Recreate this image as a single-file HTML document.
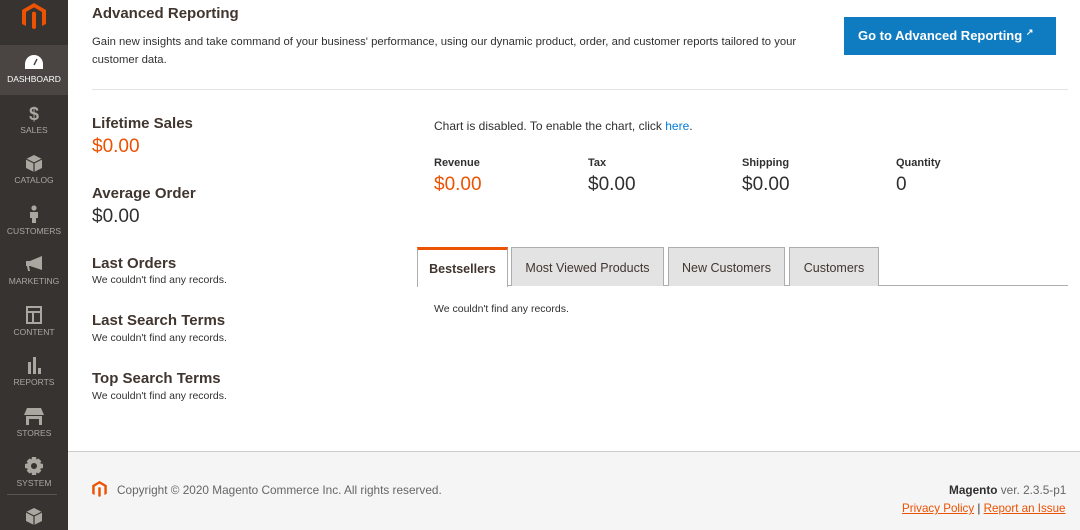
<!DOCTYPE html>
<html><head><meta charset="utf-8"><style>
*{box-sizing:border-box;margin:0;padding:0}
body{width:1080px;height:530px;overflow:hidden;font-family:"Liberation Sans",sans-serif;color:#303030;background:#fff;position:relative}
.sb{position:absolute;left:0;top:0;width:68px;height:530px;background:#373330}
.sb .it{position:absolute;left:0;width:68px;height:50px;text-align:center;color:#aaa6a0;font-size:8.5px}
.sb .it.act{background:#4a4542;color:#fff}
.sb svg.ic{display:block;margin:8px auto 3px;width:20px;height:18px;fill:#aaa6a0}
.sb .act svg.ic{fill:#fff}
.a{position:absolute;white-space:nowrap}
.h{font-weight:bold;font-size:15px;color:#41362f}
.s{font-size:11px;color:#303030}
.org{color:#eb5202}
.big{font-size:19px}
.tab{position:absolute;top:247px;height:39px;background:#e3e3e3;border:1px solid #adadad;border-bottom:none;font-size:12.5px;color:#41362f;text-align:center;line-height:40px}
</style></head><body>
<div class="sb">
<svg class="a" style="left:22px;top:3px" width="24" height="28" viewBox="0 0 24 28"><path d="M12 0L0 7v14l4 2V9l8-4.6L20 9v14l4-2V7z M10 9.5v15.5l2 1.2 2-1.2V9.5l-2-1z" fill="#eb5202"/></svg>
<div class="it act" style="top:45px"><svg class="ic" viewBox="0 0 20 18"><path d="M10 2A9 9 0 0 0 1 11v5h18v-5A9 9 0 0 0 10 2z"/><path d="M10 12l3-6" stroke="#4a4542" stroke-width="1.5"/></svg>DASHBOARD</div>
<div class="it" style="top:96px"><svg class="ic" viewBox="0 0 20 18"><text x="10" y="16" text-anchor="middle" font-size="18" font-weight="bold" font-family="Liberation Sans" fill="#aaa6a0">$</text></svg>SALES</div>
<div class="it" style="top:146px"><svg class="ic" viewBox="0 0 20 18"><path d="M10 1l8 4v9l-8 4-8-4V5z"/><path d="M2 5l8 4 8-4M10 9v9" stroke="#373330" stroke-width="1.2" fill="none"/></svg>CATALOG</div>
<div class="it" style="top:197px"><svg class="ic" viewBox="0 0 20 18"><circle cx="10" cy="3" r="2.6"/><path d="M6 7h8v6h-2v5h-4v-5H6z"/></svg>CUSTOMERS</div>
<div class="it" style="top:247px"><svg class="ic" viewBox="0 0 20 18"><path d="M2 6h4l12-5v14L6 11H5l1 5H4l-1-5H2z"/></svg>MARKETING</div>
<div class="it" style="top:298px"><svg class="ic" viewBox="0 0 20 18"><path d="M2 0h16v18H2z M4 2v3h12V2z M4 7v9h4V7z M10 7v9h6V7z" fill-rule="evenodd"/></svg>CONTENT</div>
<div class="it" style="top:348px"><svg class="ic" viewBox="0 0 20 18"><path d="M4 6h3v12H4zM9 1h3v17H9zM14 12h3v6h-3z"/></svg>REPORTS</div>
<div class="it" style="top:399px"><svg class="ic" viewBox="0 0 20 18"><path d="M3 1h14l3 7H0z M2 9h16v9H2z"/><path d="M5 12h10v6H5z" fill="#373330"/></svg>STORES</div>
<div class="it" style="top:449px"><svg class="ic" viewBox="0 0 20 18"><path d="M8 0h4l.5 2.5 2-1 2.8 2.8-1.2 2 2.9.7v4l-2.9.7 1.2 2-2.8 2.8-2-1L12 18H8l-.5-2.5-2 1-2.8-2.8 1.2-2L1 11V7l2.9-.7-1.2-2L5.5 1.5l2 1z"/><circle cx="10" cy="9" r="3" fill="#373330"/></svg>SYSTEM</div>
<div class="a" style="left:7px;top:494px;width:50px;height:1px;background:#5a5550"></div>
<svg class="a" style="left:24px;top:507px" width="20" height="18" viewBox="0 0 20 18"><path d="M10 1l8 4v9l-8 4-8-4V5z" fill="#aaa6a0"/><path d="M2 5l8 4 8-4M10 9v9" stroke="#373330" stroke-width="1.2" fill="none"/></svg>
</div>

<div class="a h" style="left:92px;top:5px">Advanced Reporting</div>
<div class="a s" style="left:92px;top:33px;font-size:11.3px;line-height:18px;white-space:normal;width:740px">Gain new insights and take command of your business' performance, using our dynamic product, order, and customer reports tailored to your customer data.</div>
<div class="a" style="left:844px;top:17px;width:212px;height:38px;background:#0f7bc1;color:#fff;font-size:13px;font-weight:bold;line-height:38px;padding-left:14px">Go to Advanced Reporting <span style="font-size:9px;position:relative;top:-5px">↗</span></div>
<div class="a" style="left:92px;top:89px;width:976px;height:1px;background:#e3e3e3"></div>

<div class="a h" style="left:92px;top:115px">Lifetime Sales</div>
<div class="a org big" style="left:92px;top:136px">$0.00</div>
<div class="a h" style="left:92px;top:185px">Average Order</div>
<div class="a big" style="left:92px;top:206px">$0.00</div>
<div class="a h" style="left:92px;top:255px">Last Orders</div>
<div class="a s" style="left:92px;top:274px;font-size:10.5px">We couldn't find any records.</div>
<div class="a h" style="left:92px;top:312px">Last Search Terms</div>
<div class="a s" style="left:92px;top:332px;font-size:10.5px">We couldn't find any records.</div>
<div class="a h" style="left:92px;top:370px">Top Search Terms</div>
<div class="a s" style="left:92px;top:390px;font-size:10.5px">We couldn't find any records.</div>

<div class="a" style="left:434px;top:119px;font-size:12px">Chart is disabled. To enable the chart, click <span style="color:#007bdb">here</span>.</div>
<div class="a s" style="left:434px;top:157px;font-weight:bold">Revenue</div>
<div class="a org big" style="left:434px;top:174px">$0.00</div>
<div class="a s" style="left:588px;top:157px;font-weight:bold">Tax</div>
<div class="a big" style="left:588px;top:174px">$0.00</div>
<div class="a s" style="left:742px;top:157px;font-weight:bold">Shipping</div>
<div class="a big" style="left:742px;top:174px">$0.00</div>
<div class="a s" style="left:896px;top:157px;font-weight:bold">Quantity</div>
<div class="a big" style="left:896px;top:174px">0</div>

<div class="a" style="left:417px;top:285px;width:651px;height:1px;background:#adadad"></div>
<div class="tab" style="left:417px;width:91px;height:40px;background:#fff;border-top:3px solid #eb5202;font-weight:bold;line-height:38px">Bestsellers</div>
<div class="tab" style="left:511px;width:153px">Most Viewed Products</div>
<div class="tab" style="left:668px;width:117px">New Customers</div>
<div class="tab" style="left:789px;width:90px">Customers</div>
<div class="a s" style="left:434px;top:303px;font-size:10.5px">We couldn't find any records.</div>

<div class="a" style="left:68px;top:451px;width:1012px;height:79px;background:#f5f5f5;border-top:1px solid #ccc"></div>
<svg class="a" style="left:92px;top:481px" width="15" height="17" viewBox="0 0 24 28"><path d="M12 0L0 7v14l4 2V9l8-4.6L20 9v14l4-2V7z M10 11v14l2 1.2 2-1.2V11l-2-1z" fill="#eb5202"/></svg>
<div class="a" style="left:117px;top:483px;font-size:11.8px;color:#666">Copyright © 2020 Magento Commerce Inc. All rights reserved.</div>
<div class="a" style="left:949px;top:483px;font-size:11.8px;color:#666"><b style="color:#303030">Magento</b> ver. 2.3.5-p1</div>
<div class="a" style="left:902px;top:502px;font-size:11.6px;color:#eb5202"><u>Privacy Policy</u> <span style="color:#303030">|</span> <u>Report an Issue</u></div>
</body></html>
